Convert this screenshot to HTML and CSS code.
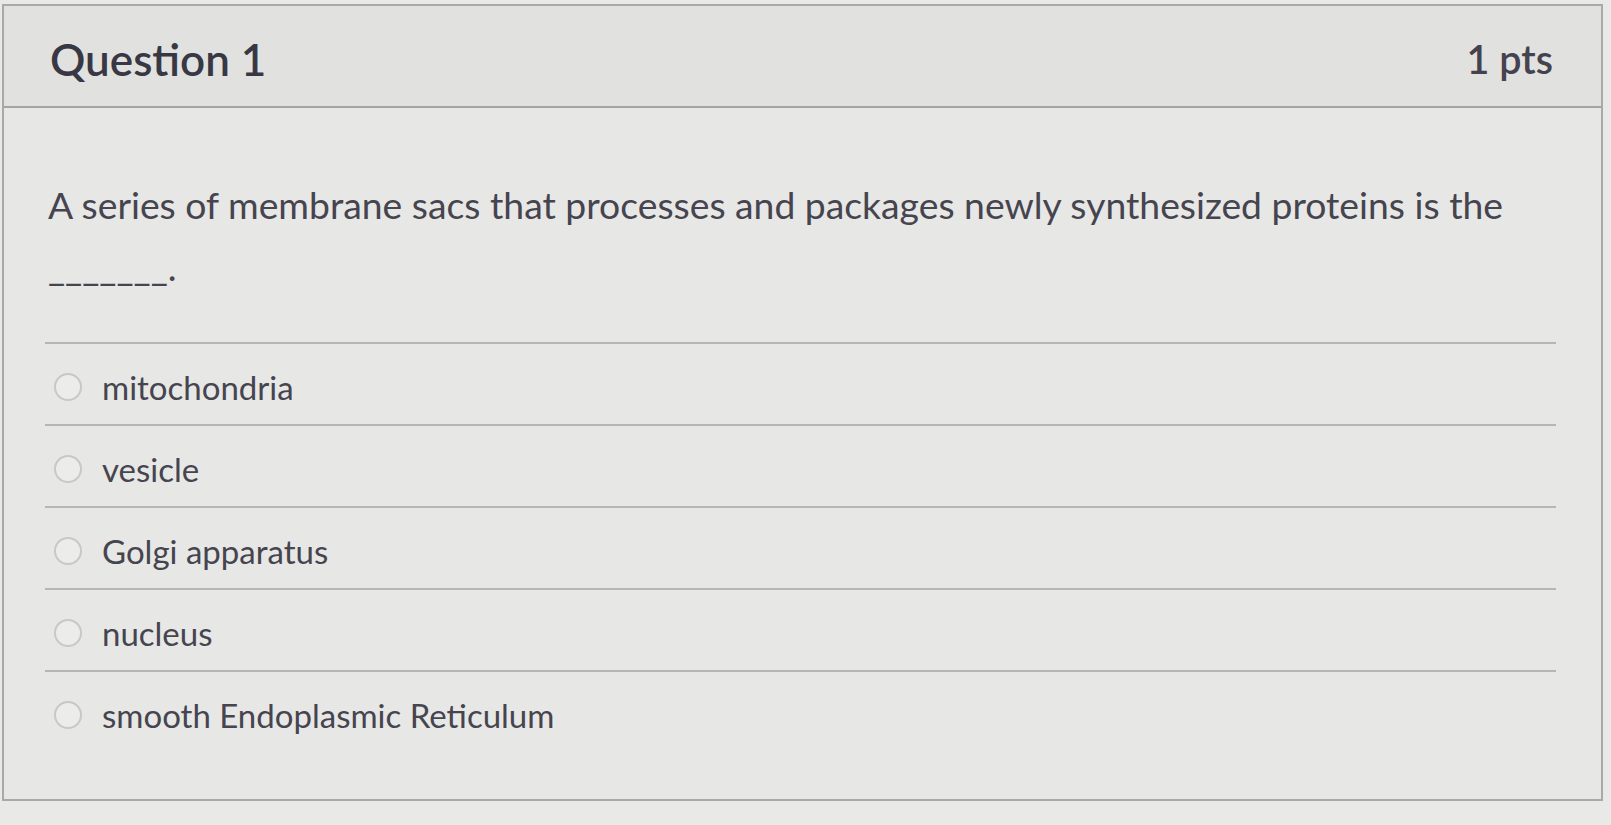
FILE: index.html
```html
<!DOCTYPE html>
<html lang="en">
<head>
<meta charset="utf-8">
<title>Question 1</title>
<link rel="stylesheet" href="styles.css">
</head>
<body>
<div class="page">
  <div class="card">
    <div class="header">
      <h2 class="q-name">Question 1</h2>
      <span class="q-points">1 pts</span>
    </div>
    <div class="body">
      <p class="q-text">A series of membrane sacs that processes and packages newly synthesized proteins is the <span class="blank">_______</span>.</p>
      <ul class="answers">
        <li class="answer"><span class="radio"></span><span class="label">mitochondria</span></li>
        <li class="answer"><span class="radio"></span><span class="label">vesicle</span></li>
        <li class="answer"><span class="radio"></span><span class="label">Golgi apparatus</span></li>
        <li class="answer"><span class="radio"></span><span class="label">nucleus</span></li>
        <li class="answer"><span class="radio"></span><span class="label">smooth Endoplasmic Reticulum</span></li>
      </ul>
    </div>
  </div>
</div>
</body>
</html>
```
FILE: styles.css
```css
html, body {
  margin: 0;
  padding: 0;
}
body {
  background: #e9e9e7;
  font-family: Lato, "Open Sans", "Liberation Sans", sans-serif;
  color: #45444f;
  width: 1611px;
  height: 825px;
  overflow: hidden;
}
.page {
  padding: 4px 8px 0 2px;
}
.card {
  border: 2px solid #a9a9a9;
  background: #e7e7e5;
  height: 797px;
  box-sizing: border-box;
  display: flex;
  flex-direction: column;
}
.header {
  height: 95px;
  background: #e1e1df;
  border-bottom: 2px solid #a4a4a4;
  display: flex;
  align-items: center;
  justify-content: space-between;
  padding: 5px 48px 0 46px;
  box-sizing: content-box;
  flex: none;
}
.q-name {
  margin: 0;
  font-size: 44px;
  font-weight: 600;
  color: #383844;
}
.q-points {
  font-size: 39.5px;
  font-weight: 600;
  color: #43424e;
}
.body {
  padding: 66px 45px 0 41px;
}
.q-text {
  margin: 0 0 0 3px;
  font-size: 37.3px;
  line-height: 62px;
  color: #45444f;
}
.blank {
  letter-spacing: 0;
}
.answers {
  list-style: none;
  margin: 44px 0 0 0;
  padding: 0;
}
.answer {
  border-top: 2px solid #b6b6b4;
  height: 82px;
  display: flex;
  align-items: center;
  padding-top: 5px;
  box-sizing: border-box;
}
.radio {
  width: 24px;
  height: 24px;
  border: 2px solid #c8c8c6;
  border-radius: 50%;
  background: #ececea;
  margin-left: 9px;
  margin-right: 20px;
  flex: none;
}
.label {
  font-size: 33px;
  color: #45444f;
}
```
